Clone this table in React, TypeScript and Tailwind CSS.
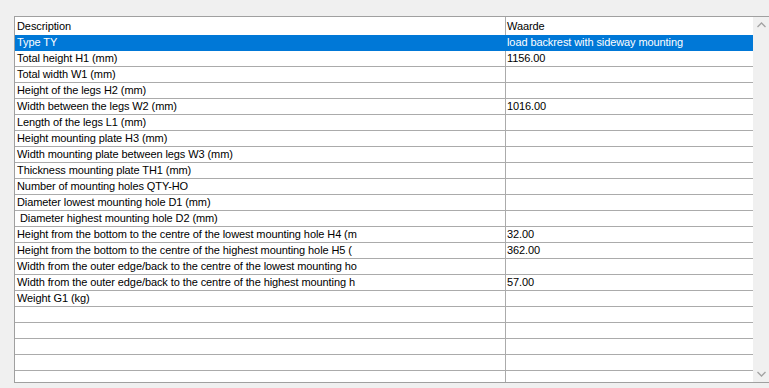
import React from 'react';

const ROWS: { label: string; value: string }[] = [
  { label: 'Type TY', value: 'load backrest with sideway mounting' },
  { label: 'Total height H1 (mm)', value: '1156.00' },
  { label: 'Total width W1 (mm)', value: '' },
  { label: 'Height of the legs H2 (mm)', value: '' },
  { label: 'Width between the legs W2 (mm)', value: '1016.00' },
  { label: 'Length of the legs L1 (mm)', value: '' },
  { label: 'Height mounting plate H3 (mm)', value: '' },
  { label: 'Width mounting plate between legs W3 (mm)', value: '' },
  { label: 'Thickness mounting plate TH1 (mm)', value: '' },
  { label: 'Number of mounting holes QTY-HO', value: '' },
  { label: 'Diameter lowest mounting hole D1 (mm)', value: '' },
  { label: '\u00A0Diameter highest mounting hole D2 (mm)', value: '' },
  { label: 'Height from the bottom to the centre of the lowest mounting hole H4 (m', value: '32.00' },
  { label: 'Height from the bottom to the centre of the highest mounting hole H5 (', value: '362.00' },
  { label: 'Width from the outer edge/back to the centre of the lowest mounting ho', value: '' },
  { label: 'Width from the outer edge/back to the centre of the highest mounting h', value: '57.00' },
  { label: 'Weight G1 (kg)', value: '' },
  { label: '', value: '' },
  { label: '', value: '' },
  { label: '', value: '' },
  { label: '', value: '' },
  { label: '', value: '' },
];

export default function App() {
  return (
    <div
      className="w-[769px] h-[388px] bg-[#f0f0f0] pt-[16px] pl-[14px] overflow-hidden text-[11px] tracking-[-0.09px] text-black"
      style={{ fontFamily: '"Liberation Sans", Arial, sans-serif' }}
    >
      <div className="flex h-[367px] border-t border-l border-b border-[#a0a0a0] bg-white">
        {/* grid body */}
        <div className="w-[739px] flex flex-col overflow-hidden">
          <div className="flex h-[18px] shrink-0">
            <div className="w-[491px] pl-[2px] leading-[18px] border-r border-[#ababab]">Description</div>
            <div className="flex-1 pl-[1px] leading-[18px]">Waarde</div>
          </div>
          {ROWS.map((row, i) => {
            const selected = i === 0;
            return (
              <div
                key={i}
                className={`flex h-[16px] shrink-0 border-b ${
                  selected ? 'bg-[#0078d7] text-white border-[#0078d7]' : 'border-[#ababab]'
                }`}
              >
                <div
                  className={`w-[491px] pl-[2px] leading-[15px] whitespace-nowrap overflow-hidden border-r ${
                    selected ? 'border-[#0078d7]' : 'border-[#ababab]'
                  }`}
                >
                  {row.label}
                </div>
                <div className="flex-1 pl-[1px] leading-[15px] whitespace-nowrap overflow-hidden">{row.value}</div>
              </div>
            );
          })}
        </div>
        {/* scrollbar */}
        <div className="w-[16px] bg-[#f0f0f0] flex flex-col justify-between items-center py-[5px]">
          <svg width="9" height="6" viewBox="0 0 9 6">
            <path d="M0.5 5 L4.5 1 L8.5 5" fill="none" stroke="#a3a3a3" strokeWidth="1.3" />
          </svg>
          <svg width="9" height="6" viewBox="0 0 9 6">
            <path d="M0.5 1 L4.5 5 L8.5 1" fill="none" stroke="#a3a3a3" strokeWidth="1.3" />
          </svg>
        </div>
      </div>
    </div>
  );
}
